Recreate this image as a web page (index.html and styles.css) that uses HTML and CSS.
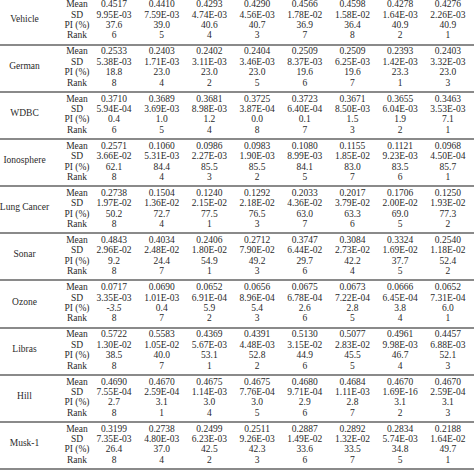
FILE: index.html
```html
<!DOCTYPE html>
<html>
<head>
<meta charset="utf-8">
<link rel="stylesheet" href="styles.css">
</head>
<body>
<div class="table">
  <div class="group">
    <div class="name">Vehicle</div>
    <div class="vals">
      <span>Mean</span><span>0.4517</span><span>0.4410</span><span>0.4293</span><span>0.4290</span><span>0.4566</span><span>0.4598</span><span>0.4278</span><span>0.4276</span>
      <span>SD</span><span>9.95E-03</span><span>7.59E-03</span><span>4.74E-03</span><span>4.56E-03</span><span>1.78E-02</span><span>1.58E-02</span><span>1.64E-03</span><span>2.26E-03</span>
      <span>PI (%)</span><span>37.6</span><span>39.0</span><span>40.6</span><span>40.7</span><span>36.9</span><span>36.4</span><span>40.9</span><span>40.9</span>
      <span>Rank</span><span>6</span><span>5</span><span>4</span><span>3</span><span>7</span><span>8</span><span>2</span><span>1</span>
    </div>
  </div>
  <div class="group">
    <div class="name">German</div>
    <div class="vals">
      <span>Mean</span><span>0.2533</span><span>0.2403</span><span>0.2402</span><span>0.2404</span><span>0.2509</span><span>0.2509</span><span>0.2393</span><span>0.2403</span>
      <span>SD</span><span>5.38E-03</span><span>1.71E-03</span><span>3.11E-03</span><span>3.46E-03</span><span>8.37E-03</span><span>6.25E-03</span><span>1.42E-03</span><span>3.32E-03</span>
      <span>PI (%)</span><span>18.8</span><span>23.0</span><span>23.0</span><span>23.0</span><span>19.6</span><span>19.6</span><span>23.3</span><span>23.0</span>
      <span>Rank</span><span>8</span><span>4</span><span>2</span><span>5</span><span>6</span><span>7</span><span>1</span><span>3</span>
    </div>
  </div>
  <div class="group">
    <div class="name">WDBC</div>
    <div class="vals">
      <span>Mean</span><span>0.3710</span><span>0.3689</span><span>0.3681</span><span>0.3725</span><span>0.3723</span><span>0.3671</span><span>0.3655</span><span>0.3463</span>
      <span>SD</span><span>5.94E-04</span><span>3.69E-03</span><span>8.98E-03</span><span>3.87E-04</span><span>6.40E-04</span><span>8.50E-03</span><span>6.04E-03</span><span>3.53E-03</span>
      <span>PI (%)</span><span>0.4</span><span>1.0</span><span>1.2</span><span>0.0</span><span>0.1</span><span>1.5</span><span>1.9</span><span>7.1</span>
      <span>Rank</span><span>6</span><span>5</span><span>4</span><span>8</span><span>7</span><span>3</span><span>2</span><span>1</span>
    </div>
  </div>
  <div class="group">
    <div class="name">Ionosphere</div>
    <div class="vals">
      <span>Mean</span><span>0.2571</span><span>0.1060</span><span>0.0986</span><span>0.0983</span><span>0.1080</span><span>0.1155</span><span>0.1121</span><span>0.0968</span>
      <span>SD</span><span>3.66E-02</span><span>5.31E-03</span><span>2.27E-03</span><span>1.90E-03</span><span>8.99E-03</span><span>1.85E-02</span><span>9.23E-03</span><span>4.50E-04</span>
      <span>PI (%)</span><span>62.1</span><span>84.4</span><span>85.5</span><span>85.5</span><span>84.1</span><span>83.0</span><span>83.5</span><span>85.7</span>
      <span>Rank</span><span>8</span><span>4</span><span>3</span><span>2</span><span>5</span><span>7</span><span>6</span><span>1</span>
    </div>
  </div>
  <div class="group">
    <div class="name">Lung Cancer</div>
    <div class="vals">
      <span>Mean</span><span>0.2738</span><span>0.1504</span><span>0.1240</span><span>0.1292</span><span>0.2033</span><span>0.2017</span><span>0.1706</span><span>0.1250</span>
      <span>SD</span><span>1.97E-02</span><span>1.36E-02</span><span>2.15E-02</span><span>2.18E-02</span><span>4.36E-02</span><span>3.79E-02</span><span>2.00E-02</span><span>1.93E-02</span>
      <span>PI (%)</span><span>50.2</span><span>72.7</span><span>77.5</span><span>76.5</span><span>63.0</span><span>63.3</span><span>69.0</span><span>77.3</span>
      <span>Rank</span><span>8</span><span>4</span><span>1</span><span>3</span><span>7</span><span>6</span><span>5</span><span>2</span>
    </div>
  </div>
  <div class="group">
    <div class="name">Sonar</div>
    <div class="vals">
      <span>Mean</span><span>0.4843</span><span>0.4034</span><span>0.2406</span><span>0.2712</span><span>0.3747</span><span>0.3084</span><span>0.3324</span><span>0.2540</span>
      <span>SD</span><span>2.96E-02</span><span>2.48E-02</span><span>1.80E-02</span><span>7.90E-02</span><span>6.44E-02</span><span>2.73E-02</span><span>1.69E-02</span><span>1.18E-02</span>
      <span>PI (%)</span><span>9.2</span><span>24.4</span><span>54.9</span><span>49.2</span><span>29.7</span><span>42.2</span><span>37.7</span><span>52.4</span>
      <span>Rank</span><span>8</span><span>7</span><span>1</span><span>3</span><span>6</span><span>4</span><span>5</span><span>2</span>
    </div>
  </div>
  <div class="group">
    <div class="name">Ozone</div>
    <div class="vals">
      <span>Mean</span><span>0.0717</span><span>0.0690</span><span>0.0652</span><span>0.0656</span><span>0.0675</span><span>0.0673</span><span>0.0666</span><span>0.0652</span>
      <span>SD</span><span>3.35E-03</span><span>1.01E-03</span><span>6.91E-04</span><span>8.96E-04</span><span>6.78E-04</span><span>7.22E-04</span><span>6.45E-04</span><span>7.31E-04</span>
      <span>PI (%)</span><span class="neg">-3.5</span><span>0.4</span><span>5.9</span><span>5.4</span><span>2.6</span><span>2.8</span><span>3.8</span><span>6.0</span>
      <span>Rank</span><span>8</span><span>7</span><span>2</span><span>3</span><span>6</span><span>5</span><span>4</span><span>1</span>
    </div>
  </div>
  <div class="group">
    <div class="name">Libras</div>
    <div class="vals">
      <span>Mean</span><span>0.5722</span><span>0.5583</span><span>0.4369</span><span>0.4391</span><span>0.5130</span><span>0.5077</span><span>0.4961</span><span>0.4457</span>
      <span>SD</span><span>1.30E-02</span><span>1.05E-02</span><span>5.67E-03</span><span>4.48E-03</span><span>3.15E-02</span><span>2.83E-02</span><span>9.98E-03</span><span>6.88E-03</span>
      <span>PI (%)</span><span>38.5</span><span>40.0</span><span>53.1</span><span>52.8</span><span>44.9</span><span>45.5</span><span>46.7</span><span>52.1</span>
      <span>Rank</span><span>8</span><span>7</span><span>1</span><span>2</span><span>6</span><span>5</span><span>4</span><span>3</span>
    </div>
  </div>
  <div class="group">
    <div class="name">Hill</div>
    <div class="vals">
      <span>Mean</span><span>0.4690</span><span>0.4670</span><span>0.4675</span><span>0.4675</span><span>0.4680</span><span>0.4684</span><span>0.4670</span><span>0.4670</span>
      <span>SD</span><span>7.55E-04</span><span>2.59E-04</span><span>1.14E-03</span><span>7.76E-04</span><span>9.71E-04</span><span>1.11E-03</span><span>1.69E-16</span><span>2.59E-04</span>
      <span>PI (%)</span><span>2.7</span><span>3.1</span><span>3.0</span><span>3.0</span><span>2.9</span><span>2.8</span><span>3.1</span><span>3.1</span>
      <span>Rank</span><span>8</span><span>1</span><span>4</span><span>5</span><span>6</span><span>7</span><span>2</span><span>3</span>
    </div>
  </div>
  <div class="group">
    <div class="name">Musk-1</div>
    <div class="vals">
      <span>Mean</span><span>0.3199</span><span>0.2738</span><span>0.2499</span><span>0.2511</span><span>0.2887</span><span>0.2892</span><span>0.2834</span><span>0.2188</span>
      <span>SD</span><span>7.35E-03</span><span>4.80E-03</span><span>6.23E-03</span><span>9.26E-03</span><span>1.49E-02</span><span>1.32E-02</span><span>5.74E-03</span><span>1.64E-02</span>
      <span>PI (%)</span><span>26.4</span><span>37.0</span><span>42.5</span><span>42.3</span><span>33.6</span><span>33.5</span><span>34.8</span><span>49.7</span>
      <span>Rank</span><span>8</span><span>4</span><span>2</span><span>3</span><span>6</span><span>7</span><span>5</span><span>1</span>
    </div>
  </div>
</div>
</body>
</html>
```

FILE: styles.css
```css
html, body {
  margin: 0;
  padding: 0;
  overflow: hidden;
  background: #ffffff;
}

body {
  font-family: "Liberation Serif", "Times New Roman", serif;
  font-size: 9.5px;
  color: #2a2a2a;
}

.table {
  margin-top: -1.5px;
  margin-left: -14.8px;
  width: 492px;
}

.group {
  display: flex;
  align-items: center;
  padding: 0.8px 0 2.8px;
  border-bottom: 2px solid #8a8a8a;
}

.name {
  width: 78.6px;
  flex: none;
  text-align: center;
  white-space: nowrap;
  padding-bottom: 3px;
}

.vals {
  display: grid;
  grid-template-columns: 26.4px repeat(8, 47.7px);
  grid-auto-rows: 10.4px;
  line-height: 10.4px;
  text-align: center;
  white-space: nowrap;
}

.vals span {
  display: block;
}

.neg {
  font-style: italic;
}
```
